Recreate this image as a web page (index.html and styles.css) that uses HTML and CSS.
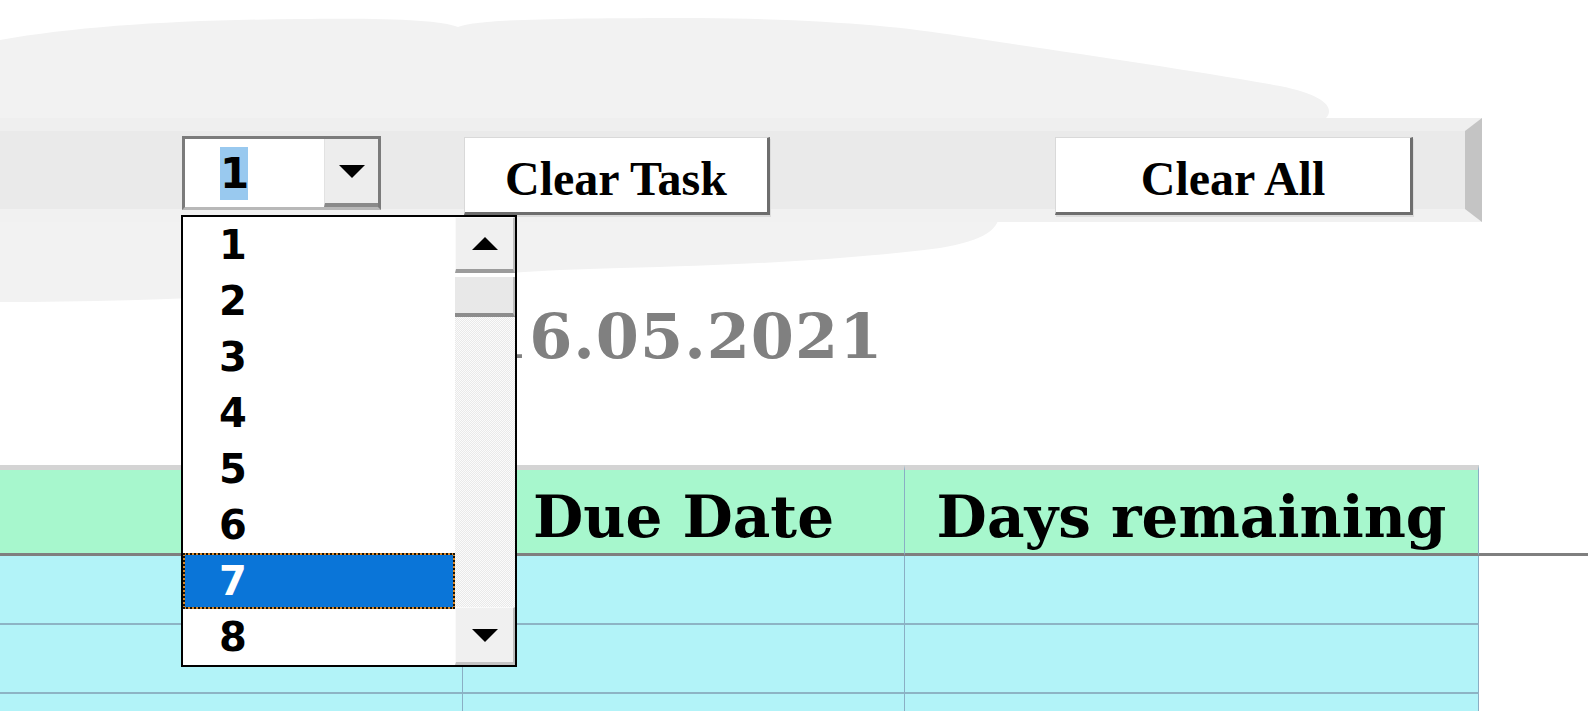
FILE: index.html
```html
<!DOCTYPE html>
<html lang="en">
<head>
<meta charset="utf-8">
<title>Task tracker</title>
<link rel="stylesheet" href="styles.css">
</head>
<body>
<div class="page">
  <header class="top">
    <svg class="clouds" width="1588" height="320" viewBox="0 0 1588 320" aria-hidden="true">
      <path fill="#f2f2f2" d="M0,40 C80,26 180,20 300,19 C390,18 440,20 458,27 C475,20 540,18 700,18 C820,19 900,26 960,36 C1050,50 1180,68 1280,86 C1330,96 1340,112 1318,124 L1000,210 C1000,230 985,240 940,248 C860,258 760,265 620,268 C500,271 430,279 360,287 C250,297 120,302 0,302 Z"/>
    </svg>
    <div class="band">
      <div class="combo">
        <div class="combo-value"><span class="sel">1</span></div>
        <div class="combo-btn">
          <svg width="26" height="13" viewBox="0 0 26 13"><polygon points="0,0 26,0 13,13" fill="#000"/></svg>
        </div>
      </div>
      <button class="btn btn-task">Clear Task</button>
      <button class="btn btn-all">Clear All</button>
    </div>
  </header>

  <div class="date">16.05.2021</div>

  <div class="sheet">
    <div class="cell head c1"></div>
    <div class="cell head c2">Due Date</div>
    <div class="cell head c3">Days remaining</div>
    <div class="cell head tail"></div>

    <div class="cell row c1"></div>
    <div class="cell row c2"></div>
    <div class="cell row c3"></div>
    <div class="cell row tail"></div>

    <div class="cell row c1"></div>
    <div class="cell row c2"></div>
    <div class="cell row c3"></div>
    <div class="cell row tail"></div>

    <div class="cell row c1"></div>
    <div class="cell row c2"></div>
    <div class="cell row c3"></div>
    <div class="cell row tail"></div>
  </div>

  <div class="listbox">
    <ul class="items">
      <li>1</li>
      <li>2</li>
      <li>3</li>
      <li>4</li>
      <li>5</li>
      <li>6</li>
      <li class="selected">7</li>
      <li>8</li>
    </ul>
    <div class="scrollbar">
      <div class="sb-btn sb-up">
        <svg width="26" height="13" viewBox="0 0 26 13"><polygon points="0,13 26,13 13,0" fill="#000"/></svg>
      </div>
      <div class="sb-thumb"></div>
      <div class="sb-track"></div>
      <div class="sb-btn sb-down">
        <svg width="26" height="13" viewBox="0 0 26 13"><polygon points="0,0 26,0 13,13" fill="#000"/></svg>
      </div>
    </div>
  </div>
</div>
</body>
</html>
```

FILE: styles.css
```css
* {
  box-sizing: border-box;
}

html, body {
  margin: 0;
  padding: 0;
  background: #ffffff;
}

body {
  width: 1588px;
  height: 711px;
  overflow: hidden;
  font-family: "DejaVu Serif", "Liberation Serif", serif;
}

.page {
  position: relative;
  width: 1588px;
  height: 711px;
  overflow: hidden;
}

/* ---------- top area with cloud and bevelled band ---------- */
.top {
  position: relative;
  height: 300px;
  padding-top: 118px;
}

.clouds {
  position: absolute;
  left: 0;
  top: 0;
}

.band {
  position: relative;
  display: flex;
  align-items: flex-start;
  width: 1482px;
  height: 104px;
  padding-left: 182px;
  background: #eaeaea;
  border-top: 13px solid #efefef;
  border-bottom: 13px solid #f1f1f1;
  border-right: 17px solid #c4c4c4;
}

.combo {
  display: flex;
  width: 199px;
  height: 74px;
  margin-top: 5px;
  background: #ffffff;
  border: 3px solid #7b7b7b;
  border-bottom-color: #b8b8b8;
}

.combo-value {
  flex: 1;
  display: flex;
  align-items: center;
  padding-left: 35px;
}

.sel {
  display: block;
  width: 28px;
  height: 53px;
  background: #99c9ef;
  font-family: "DejaVu Sans", "Liberation Sans", sans-serif;
  font-weight: bold;
  font-size: 42px;
  line-height: 53px;
  color: #000;
}

.combo-btn {
  width: 54px;
  display: flex;
  align-items: center;
  justify-content: center;
  background: #ededed;
  border-left: 1px solid #e2e2e2;
  border-bottom: 4px solid #8a8a8a;
}

.btn {
  height: 78px;
  margin-top: 6px;
  padding: 6px 0 0;
  background: #ffffff;
  border-top: 1px solid #d9d9d9;
  border-left: 1px solid #d9d9d9;
  border-right: 3px solid #6e6e6e;
  border-bottom: 3px solid #6e6e6e;
  box-shadow: 1px 2px 0 #dcdcdc;
  font-family: "Liberation Serif", "DejaVu Serif", serif;
  font-weight: bold;
  font-size: 48px;
  color: #000;
  text-align: center;
}

.btn-task {
  width: 306px;
  margin-left: 83px;
}

.btn-all {
  width: 358px;
  margin-left: 285px;
}

/* ---------- date ---------- */
.date {
  margin-top: 6px;
  padding-left: 485px;
  font-family: "DejaVu Serif", serif;
  font-weight: bold;
  font-size: 62px;
  line-height: 62px;
  letter-spacing: 1px;
  color: #808080;
}

/* ---------- sheet ---------- */
.sheet {
  display: grid;
  grid-template-columns: 463px 442px 574px 1fr;
  margin-top: 97px;
}

.cell {
  font-family: "DejaVu Serif", serif;
  font-weight: bold;
  font-size: 58px;
  color: #000;
  text-align: center;
  white-space: nowrap;
}

.head {
  height: 91px;
  padding-top: 12px;
  line-height: 71px;
  background: #a7f7cd;
  border-top: 5px solid #d4d4d4;
  border-bottom: 3px solid #7f7f7f;
}

.row {
  height: 69px;
  background: #b2f3f8;
  border-bottom: 2px solid #8db3c4;
}

.c1, .c2, .c3 {
  border-right: 1px solid #8aaec4;
}

.head.tail {
  background: transparent;
  border-top-color: transparent;
}

.row.tail {
  background: transparent;
  border-bottom: 0;
}

/* ---------- open dropdown list ---------- */
.listbox {
  position: absolute;
  left: 181px;
  top: 215px;
  width: 336px;
  height: 452px;
  display: flex;
  background: #ffffff;
  border: 2px solid #000;
}

.items {
  width: 272px;
  margin: 0;
  padding: 0;
  list-style: none;
}

.items li {
  height: 56px;
  padding-left: 36px;
  font-family: "DejaVu Sans", "Liberation Sans", sans-serif;
  font-weight: bold;
  font-size: 40px;
  line-height: 56px;
  color: #000;
}

.items li.selected {
  padding-left: 34px;
  line-height: 52px;
  color: #ffffff;
  border: 2px dotted #1a1206;
  background: linear-gradient(#0a75d8, #0a75d8) padding-box, #d98a2b border-box;
}

.scrollbar {
  width: 60px;
  display: flex;
  flex-direction: column;
}

.sb-btn {
  display: flex;
  align-items: center;
  justify-content: center;
  background: #f0f0f0;
  border-top: 1px solid #fafafa;
  border-left: 1px solid #fafafa;
  border-right: 2px solid #bdbdbd;
  border-bottom: 4px solid #9c9c9c;
}

.sb-up {
  height: 56px;
}

.sb-thumb {
  height: 40px;
  margin-top: 4px;
  background: #e8e8e8;
  border-right: 2px solid #bdbdbd;
  border-bottom: 4px solid #8c8c8c;
}

.sb-track {
  flex: 1;
  background: repeating-conic-gradient(#e9e9e9 0 25%, #fbfbfb 0 50%) 0 0 / 2px 2px;
}

.sb-down {
  height: 58px;
  border-bottom: 3px solid #c4c4c4;
}
```
